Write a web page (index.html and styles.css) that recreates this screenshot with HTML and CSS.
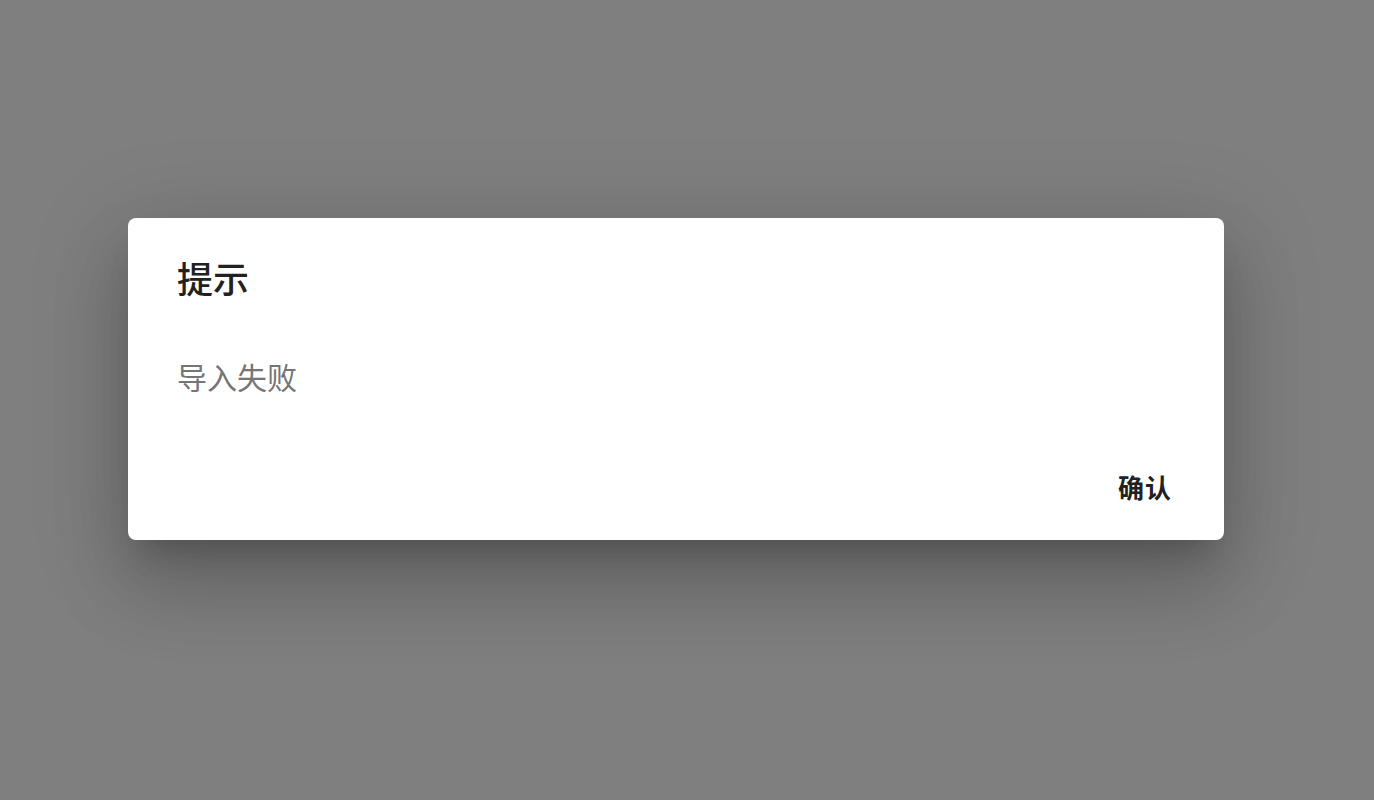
FILE: index.html
```html
<!doctype html>
<html>
  <head>
    <meta charset="utf-8">
    <title>提示</title>
    <link rel="stylesheet" href="styles.css">
  </head>
  <body>
    <div class="backdrop">
      <div class="dialog">
        <h2 class="dialog-title">提示</h2>
        <div class="dialog-content">
          <p>导入失败</p>
        </div>
        <div class="dialog-actions">
          <button class="btn">确认</button>
        </div>
      </div>
    </div>
  </body>
</html>
```

FILE: styles.css
```css
* {
  box-sizing: border-box;
}

html,
body {
  margin: 0;
  padding: 0;
  width: 100%;
  height: 100%;
  overflow: hidden;
}
body {
  font-family: "Noto Sans CJK SC", "Noto Sans", sans-serif;
  background: #fff;
  color: #212121;
}
.backdrop {
  width: 100%;
  height: 100%;
  background: rgba(0, 0, 0, 0.5);
  display: flex;
  justify-content: flex-start;
  align-items: flex-start;
  padding: 218px 0 0 128px;
}
.dialog {
  width: 1096px;
  background: #fff;
  border-radius: 8px;
  box-shadow: 0 22px 30px -14px rgba(0, 0, 0, 0.2),
    0 48px 76px 6px rgba(0, 0, 0, 0.14),
    0 18px 92px 16px rgba(0, 0, 0, 0.12);
}
.dialog-title {
  margin: 0;
  padding: 30px 48px 0 49px;
  font-size: 36px;
  line-height: 58px;
  font-weight: 500;
  color: #212121;
}
.dialog-content {
  padding: 47px 48px 0 49px;
}
.dialog-content p {
  margin: 0;
  font-size: 30px;
  line-height: 46px;
  color: #757575;
}
.dialog-actions {
  display: flex;
  justify-content: flex-end;
  padding: 70px 52px 35px;
}
.btn {
  font-family: inherit;
  font-size: 26px;
  line-height: 36px;
  font-weight: 700;
  letter-spacing: 1px;
  color: #212121;
  background: none;
  border: none;
  padding: 0;
  margin: 0;
  cursor: pointer;
}
```
